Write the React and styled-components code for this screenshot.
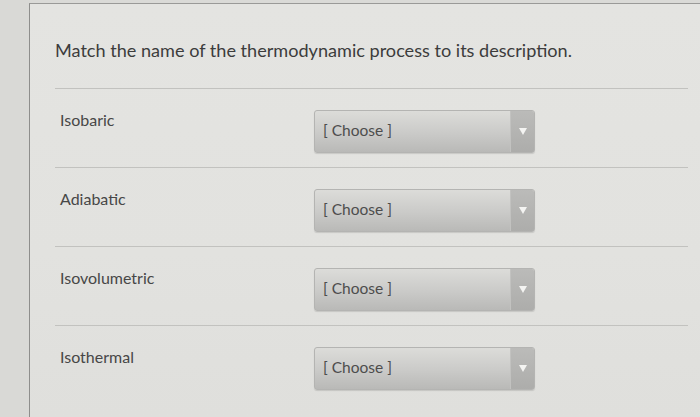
import styled, { createGlobalStyle } from "styled-components";

const GlobalStyle = createGlobalStyle`
  html, body {
    margin: 0;
    padding: 0;
    background: #dcdcd9;
  }
  body {
    font-family: Lato, "Open Sans", sans-serif;
    color: #3d3d3d;
  }
`;

const items = ["Isobaric", "Adiabatic", "Isovolumetric", "Isothermal"];

const App = () => {
  return (
    <>
      <GlobalStyle />
      <Page>
        <Gutter />
        <Panel>
          <Question>
            Match the name of the thermodynamic process to its description.
          </Question>
          <List>
            {items.map((name) => (
              <Row key={name}>
                <Label>{name}</Label>
                <Select>
                  <SelectText>[ Choose ]</SelectText>
                  <Arrow>
                    <svg width="8" height="7" viewBox="0 0 8 7">
                      <path d="M0 0 H8 L4 7 Z" fill="#f4f4f2" />
                    </svg>
                  </Arrow>
                </Select>
              </Row>
            ))}
          </List>
        </Panel>
      </Page>
    </>
  );
};

const Page = styled.div`
  display: flex;
  width: 700px;
  height: 417px;
  overflow: hidden;
  background: #dadad7;
`;

const Gutter = styled.div`
  width: 29px;
  flex-shrink: 0;
  background: #d9d9d6;
`;

const Panel = styled.div`
  flex: 1;
  margin-top: 3px;
  border-left: 1.5px solid #8e8e8c;
  border-top: 1.5px solid #9a9a98;
  background: linear-gradient(180deg, #e4e4e1 0%, #e2e2df 60%, #dfdfdc 100%);
  padding: 0 12px 0 25px;
`;

const Question = styled.div`
  font-size: 18.1px;
  line-height: 20px;
  padding-top: 36px;
  height: 48px;
  color: #3c3c3c;
  border-bottom: 1.5px solid #c2c2bf;
`;

const List = styled.div`
  display: flex;
  flex-direction: column;
`;

const Row = styled.div`
  display: flex;
  align-items: flex-start;
  height: 78px;
  border-bottom: 1.5px solid #c2c2bf;
  &:last-child {
    border-bottom: none;
  }
`;

const Label = styled.div`
  width: 254px;
  padding: 21px 0 0 5px;
  font-size: 16px;
  color: #474747;
`;

const Select = styled.div`
  margin-top: 21px;
  width: 219px;
  height: 41px;
  display: flex;
  border-radius: 3px;
  overflow: hidden;
  box-shadow: 0 1px 1px rgba(0, 0, 0, 0.12);
  background: linear-gradient(180deg, #dcdcd9 0%, #cacac8 55%, #b9b9b7 100%);
  border: 1px solid #b4b4b2;
`;

const SelectText = styled.div`
  flex: 1;
  padding: 10px 0 0 8px;
  font-size: 15.5px;
  color: #4d4d4d;
`;

const Arrow = styled.div`
  width: 23px;
  display: flex;
  align-items: center;
  justify-content: center;
  background: linear-gradient(180deg, #bbbbb9 0%, #adadab 100%);
  border-left: 1px solid #c2c2c0;
`;

export default App;
